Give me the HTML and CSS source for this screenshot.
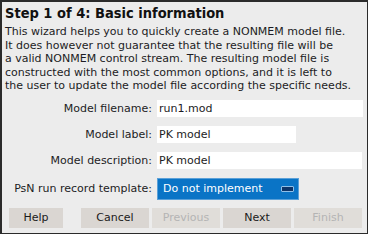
FILE: index.html
```html
<!DOCTYPE html>
<html lang="en">
<head>
    <meta charset="UTF-8">
    <title>Step 1 of 4</title>
    <link rel="stylesheet" href="styles.css">
</head>
<body>
<div class="wizard">
    <h1 class="title">Step 1 of 4: Basic information</h1>
    <p class="intro">This wizard helps you to quickly create a NONMEM model file.
It does however not guarantee that the resulting file will be
a valid NONMEM control stream. The resulting model file is
constructed with the most common options, and it is left to
the user to update the model file according the specific needs.</p>

    <div class="form">
        <label class="lbl">Model filename:</label>
        <div class="field wide">run1.mod</div>

        <label class="lbl">Model label:</label>
        <div class="field short">PK model</div>

        <label class="lbl">Model description:</label>
        <div class="field desc">PK model</div>

        <label class="lbl">PsN run record template:</label>
        <div class="combo">
            <span>Do not implement</span>
            <span class="combo-ind"></span>
        </div>
    </div>

    <div class="buttons">
        <button class="button help">Help</button>
        <button class="button">Cancel</button>
        <button class="button" disabled>Previous</button>
        <button class="button">Next</button>
        <button class="button" disabled>Finish</button>
    </div>
</div>
</body>
</html>
```

FILE: styles.css
```css
html, body{
    margin: 0;
    padding: 0;
    background-color: #ececec;
}

.wizard{
    width: 368px;
    height: 234px;
    box-sizing: border-box;
    border: 1px solid #2b2b2b;
    border-top-width: 2px;
    border-left-width: 2px;
    background-color: #ececec;
    font-family: "DejaVu Sans", Verdana, sans-serif;
    font-size: 11px;
    color: #1c1c24;
    padding: 2px 4px 0 3px;
}

.title{
    font-family: "DejaVu Sans Condensed", "DejaVu Sans", sans-serif;
    font-stretch: condensed;
    font-size: 14.5px;
    font-weight: bold;
    color: #111111;
    margin: 0;
    line-height: 18px;
}

.intro{
    margin: 3px 0 0 0;
    white-space: pre-line;
    line-height: 13.5px;
}

.form{
    display: grid;
    grid-template-columns: 147px 1fr;
    column-gap: 5px;
    row-gap: 9px;
    align-items: center;
    margin-top: 7px;
}

.lbl{
    text-align: right;
    white-space: nowrap;
}

.field{
    background-color: #ffffff;
    height: 17px;
    line-height: 17px;
    padding-left: 2px;
    box-sizing: border-box;
}

.wide{
    width: 206px;
}

.desc{
    width: 205px;
}

.short{
    width: 139px;
}

.combo{
    background-color: #0a74c6;
    color: #ffffff;
    height: 22px;
    width: 142px;
    box-sizing: border-box;
    border: 1px solid #5aa0d8;
    display: flex;
    align-items: center;
    justify-content: space-between;
    padding: 0 4px 0 5px;
}

.combo-ind{
    width: 13px;
    height: 6px;
    box-sizing: border-box;
    background-color: #0d3468;
    border: 1px solid #8fbfe8;
    border-radius: 1px;
}

.buttons{
    display: flex;
    gap: 3px;
    margin-top: 8px;
    padding-left: 4px;
}

.button{
    font-family: "DejaVu Sans", Verdana, sans-serif;
    font-size: 11px;
    background-color: #dad6d2;
    color: #1a1a1a;
    border: none;
    width: 68px;
    height: 20px;
    padding: 0;
}

.button:disabled{
    color: #b4b4b4;
    background-color: #e0ddd9;
}

.help{
    width: 54px;
    margin-right: 15px;
}
```
